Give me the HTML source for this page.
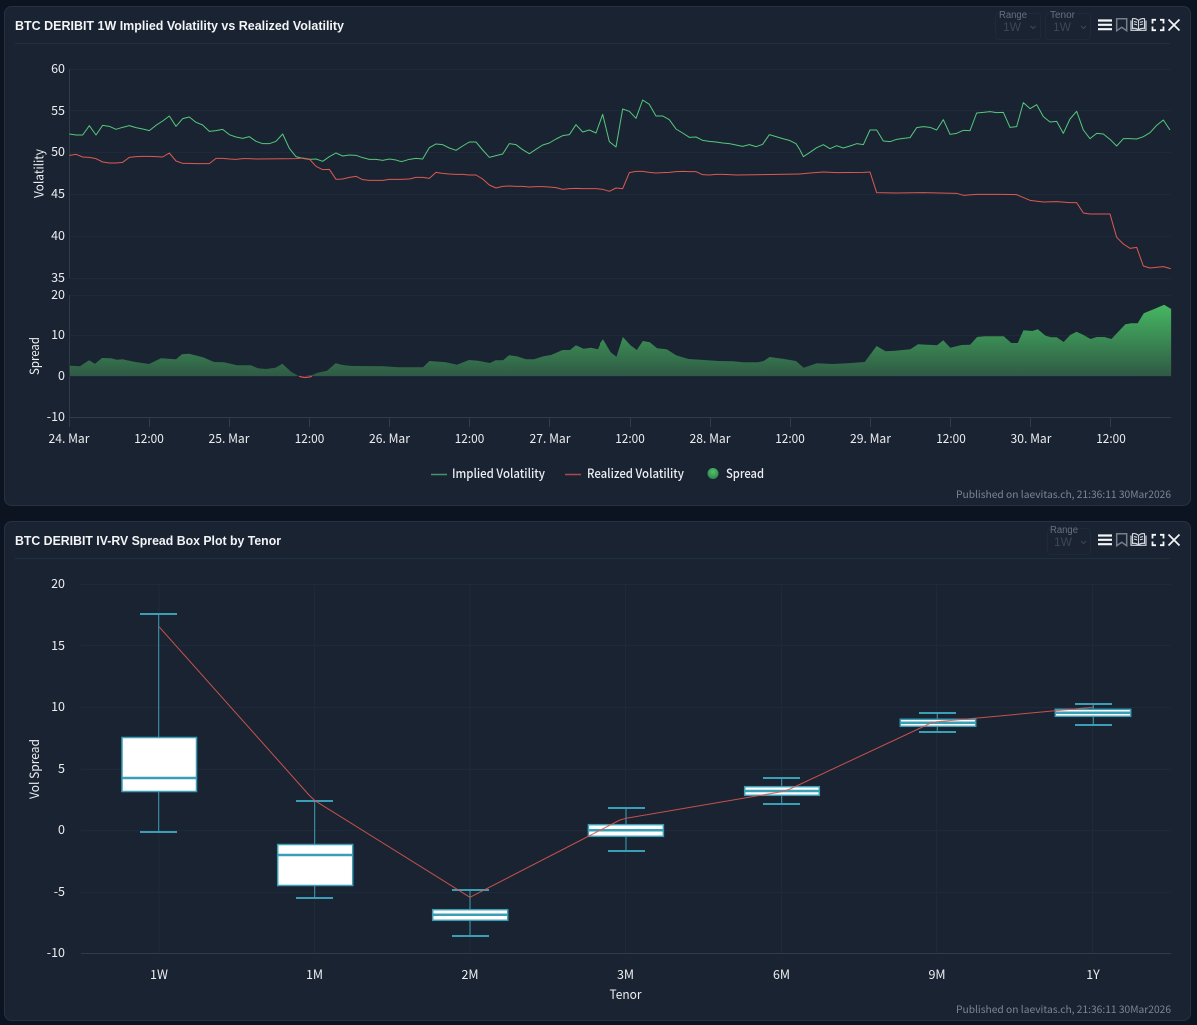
<!DOCTYPE html>
<html><head><meta charset="utf-8"><title>BTC DERIBIT Volatility</title>
<style>
html,body{margin:0;padding:0;background:#0c1321;width:1197px;height:1025px;overflow:hidden}
svg{position:absolute;left:0;top:0;display:block}
text{font-family:"Liberation Sans",sans-serif}
.t{fill:#f2f4f6;font-size:13px;font-weight:bold}
.a{fill:#eceef1;font-size:12.5px;font-family:"Noto Sans CJK JP","Liberation Sans",sans-serif}
.e{text-anchor:end}.m{text-anchor:middle}
.p{fill:#7d8793;font-size:10px;text-anchor:end;font-family:"Noto Sans CJK JP","Liberation Sans",sans-serif}
.lb{fill:#667180;font-size:10px}
.v{fill:#3c4756;font-size:12px}
.g{stroke:#1e2a3a;stroke-width:1;fill:none}
.ax{stroke:#333b47;stroke-width:1;fill:none}
.iv{fill:none;stroke:#55c87c;stroke-width:3;stroke-linejoin:round}
.rv{fill:none;stroke:#dc5a50;stroke-width:3;stroke-linejoin:round}
.c{stroke:#3a9fb5;fill:none}
</style></head><body>
<svg width="1197" height="1025" viewBox="0 0 1197 1025" xmlns="http://www.w3.org/2000/svg">
<defs>
<linearGradient id="sg" gradientUnits="userSpaceOnUse" x1="0" y1="304" x2="0" y2="376"><stop offset="0" stop-color="#46b862"/><stop offset="1" stop-color="#2f5a45"/></linearGradient>
<radialGradient id="dot" cx=".5" cy=".35" r=".7"><stop offset="0" stop-color="#4fc468"/><stop offset="1" stop-color="#2f7f4c"/></radialGradient>
<g id="icons">
<path d="M1098 20.500h14M1098 24.800h14M1098 29.200h14" stroke="#f4f6f8" stroke-width="2.200" fill="none"/>
<path d="M1116.700 18.700h10v12l-5-3.400-5 3.400z" stroke="#76808c" stroke-width="1.500" fill="none"/>
<path d="M1138.500 20.500c-2-1.900-4.300-2.200-6-1.800v9.700c2-.4 4-.1 6 1.300 2-1.400 4-1.700 6-1.300v-9.700c-1.700-.4-4-.1-6 1.800zM1138.500 20.500v9M1131 20.500v9.800h15v-9.800M1134 21.500l3 .8M1134 24l3 .8M1140 22.300l3-.8M1140 24.800l3-.8" stroke="#d3d8de" stroke-width="1.150" fill="none"/>
<path d="M1152.500 23.500v-3.700h3.500M1160 19.800h3.500v3.700M1163.500 26.500v3.700H1160M1156 30.200h-3.500v-3.700" stroke="#f4f6f8" stroke-width="1.800" fill="none"/>
<path d="M1168.500 19.500l11 11M1179.500 19.500l-11 11" stroke="#f4f6f8" stroke-width="1.700" fill="none"/>
</g>
</defs>

<!-- panels -->
<rect x="4.500" y="6.500" width="1186" height="499" rx="7" fill="#1a2332" stroke="#273140"/>
<rect x="4.500" y="521.500" width="1186" height="499" rx="7" fill="#1a2332" stroke="#273140"/>
<path d="M15 43.500H1170M15 558.500H1170" stroke="#1f3040" fill="none"/>

<!-- headers -->
<text class="t" x="15" y="30" textLength="329" lengthAdjust="spacingAndGlyphs">BTC DERIBIT 1W Implied Volatility vs Realized Volatility</text>
<text class="t" x="15" y="545" textLength="266" lengthAdjust="spacingAndGlyphs">BTC DERIBIT IV-RV Spread Box Plot by Tenor</text>

<rect x="995.500" y="13.500" width="45" height="26" rx="3" fill="none" stroke="#1f2937"/>
<rect x="1045.500" y="13.500" width="45" height="26" rx="3" fill="none" stroke="#1f2937"/>
<rect x="999" y="9" width="29" height="10" fill="#1a2332"/><rect x="1049" y="9" width="28" height="10" fill="#1a2332"/>
<text class="lb" x="999" y="18" textLength="28" lengthAdjust="spacingAndGlyphs">Range</text>
<text class="lb" x="1050" y="18" textLength="25" lengthAdjust="spacingAndGlyphs">Tenor</text>
<text class="v" x="1003" y="31">1W</text><text class="v" x="1053" y="31">1W</text>
<path d="M1030.500 26l2.500 2.500 2.500-2.500M1081 26l2.500 2.500 2.500-2.500" stroke="#3c4756" fill="none"/>
<use href="#icons"/>

<rect x="1047.500" y="528.500" width="43" height="26" rx="3" fill="none" stroke="#1f2937"/>
<rect x="1050" y="524" width="28" height="10" fill="#1a2332"/>
<text class="lb" x="1050" y="533" textLength="28" lengthAdjust="spacingAndGlyphs">Range</text>
<text class="v" x="1054" y="546">1W</text>
<path d="M1081 541l2.500 2.500 2.500-2.500" stroke="#3c4756" fill="none"/>
<use href="#icons" y="515"/>

<!-- chart 1 grid -->
<path class="g" d="M70 69.500H1171M70 110.500H1171M70 152.500H1171M70 194.500H1171M70 236.500H1171M70 278.500H1171M70 295.500H1171M70 335.500H1171M70 376.500H1171"/>
<path class="ax" d="M69.500 69V278M69.500 295V427M69 417.500H1171"/>
<path class="ax" d="M149.500 417v10M229.500 417v10M309.500 417v10M389.500 417v10M469.500 417v10M549.500 417v10M630.500 417v10M710.500 417v10M790.500 417v10M870.500 417v10M950.500 417v10M1030.500 417v10M1110.500 417v10"/>

<text class="a e" x="65" y="73">60</text><text class="a e" x="65" y="115">55</text><text class="a e" x="65" y="156">50</text><text class="a e" x="65" y="198">45</text><text class="a e" x="65" y="240">40</text><text class="a e" x="65" y="282">35</text>
<text class="a e" x="65" y="299">20</text><text class="a e" x="65" y="339">10</text><text class="a e" x="65" y="380">0</text><text class="a e" x="65" y="421">-10</text>
<text class="a m" transform="translate(43.500 173.500) rotate(-90)" textLength="49" lengthAdjust="spacingAndGlyphs">Volatility</text>
<text class="a m" transform="translate(39 356) rotate(-90)" textLength="38" lengthAdjust="spacingAndGlyphs">Spread</text>

<text class="a m" x="69" y="443" textLength="41" lengthAdjust="spacingAndGlyphs">24. Mar</text><text class="a m" x="149" y="443" textLength="29.500" lengthAdjust="spacingAndGlyphs">12:00</text><text class="a m" x="229" y="443" textLength="41" lengthAdjust="spacingAndGlyphs">25. Mar</text><text class="a m" x="309.500" y="443" textLength="29.500" lengthAdjust="spacingAndGlyphs">12:00</text><text class="a m" x="389.500" y="443" textLength="41" lengthAdjust="spacingAndGlyphs">26. Mar</text><text class="a m" x="469.500" y="443" textLength="29.500" lengthAdjust="spacingAndGlyphs">12:00</text><text class="a m" x="550" y="443" textLength="41" lengthAdjust="spacingAndGlyphs">27. Mar</text><text class="a m" x="630" y="443" textLength="29.500" lengthAdjust="spacingAndGlyphs">12:00</text><text class="a m" x="710" y="443" textLength="41" lengthAdjust="spacingAndGlyphs">28. Mar</text><text class="a m" x="790" y="443" textLength="29.500" lengthAdjust="spacingAndGlyphs">12:00</text><text class="a m" x="870.500" y="443" textLength="41" lengthAdjust="spacingAndGlyphs">29. Mar</text><text class="a m" x="951" y="443" textLength="29.500" lengthAdjust="spacingAndGlyphs">12:00</text><text class="a m" x="1031" y="443" textLength="41" lengthAdjust="spacingAndGlyphs">30. Mar</text><text class="a m" x="1111" y="443" textLength="29.500" lengthAdjust="spacingAndGlyphs">12:00</text>

<!-- spread area -->
<polygon fill="url(#sg)" points="70,376 70,365.700 80,366.300 89,360.300 95,363.700 102,358 111,358.300 117,359.700 122.500,359.300 134,361.700 149,364 161,358.300 176,359.300 182,354.300 189,353.700 203,357.300 214,362 224,362.300 237,365.300 251,365.300 258,368.300 266,369 275.500,367.700 282.400,363.700 291,371.700 298.500,376 305,376 312,375 317.600,372.700 327,370.700 335.600,363.300 342.500,365 352,366 383,366.300 398,367.300 423,367.300 429.400,361 446,362.300 457,364.700 469,360 478,360.700 490,363 495.600,360.300 503,360.300 509,355.300 516.700,356.300 526,359.300 534,359.300 543.400,356.300 551,355 562.600,350 570,350 576,345.300 583.600,348.700 591,347.700 598,349.300 600.500,343.500 600.500,376"/>
<polygon fill="url(#sg)" transform="translate(600 0) scale(.995 1) translate(-600 0)" points="600,376 600,343.300 603,339.300 610.700,352.300 616.500,356.700 623,337 630.600,345.300 637,350 643,341 650,342.300 657.400,348.300 667,349.300 676.500,355.300 688.800,359 705,360 718.600,361 734,361.300 743.500,362.300 759,362.300 764.600,361 770.300,357 783.700,358.700 797,361 804.700,367.700 818,363.300 833.400,364 848.800,363.300 866,362 878,346 887,351.300 896.600,350.700 912,349.300 919.600,344.300 938.700,345.300 945,340.300 952,347.700 963.600,345 972,344.700 979,337 986.500,336.300 1005.700,336.300 1013.300,343 1019.800,343 1025.600,330.300 1034.400,331 1040,329.300 1047.800,335.700 1053.500,337.300 1059,337.300 1066,342 1072.600,335 1079,331.700 1086,335 1093,339 1099.400,337 1107,337 1114,339 1128,324.300 1134,323.300 1140.400,323.300 1146.500,313.300 1158.800,308.300 1167,304.700 1174,309 1174,376"/>
<path d="M299 376.300l5 1.200 5-.4 3-.8" stroke="#d8504c" stroke-width="1.200" fill="none"/>

<!-- IV / RV -->
<g transform="translate(0 50) scale(.33333)">
<polyline class="iv" points="208,252 228,255 248,255 268,227 288,255 308,226 328,229 348,238 368,232 388,227 408,233 428,237 448,242 468,226 488,213 508,198 528,229 548,206 568,201 588,217 608,225 628,244 648,242 668,238 688,254 708,261 728,265 748,260 768,274 788,281 808,281 828,274 848,252 868,295 888,320 908,325 928,328 948,327 968,334 988,320 1008,309 1028,318 1048,315 1068,316 1088,323 1108,328 1128,328 1148,331 1168,327 1188,330 1200,334"/>
<polyline class="rv" points="208,316 228,313 248,321 268,322 288,326 308,336 328,339 348,339 368,337 388,322 408,320 428,319 448,319 468,320 488,321 508,309 528,333 548,340 568,340 588,341 608,341 628,341 648,325 668,325 688,327 708,328 728,326 748,326 768,327 888,326 908,324 928,327 948,349 968,359 988,358 1008,388 1028,387 1048,382 1068,379 1088,389 1108,391 1128,391 1148,391 1168,388 1200,388"/>
</g>
<g transform="translate(400 50) scale(.33333)">
<polyline class="iv" points="0,334 8,334 28,328 48,325 68,327 88,293 108,282 128,284 148,294 168,301 188,288 208,276 228,276 248,300 268,322 288,317 308,312 328,281 348,284 368,299 388,311 408,298 428,285 448,279 468,267 488,257 508,254 528,224 548,246 568,240 588,249 608,193 628,275 648,291 668,177 688,184 708,205 728,150 748,163 768,198 788,198 808,209 828,237 848,249 868,262 888,261 908,271 928,274 948,276 968,279 988,281 1008,285 1028,289 1048,284 1068,290 1088,283 1108,254 1128,260 1148,266 1168,271 1188,281 1200,300"/>
<polyline class="rv" points="0,388 28,387 48,382 68,382 88,385 108,367 128,370 148,372 168,373 188,373 208,375 228,375 248,387 268,405 288,414 308,409 328,408 348,409 368,409 388,411 408,410 428,410 448,411 468,413 488,418 508,416 528,415 548,416 568,416 588,416 608,418 628,424 648,414 668,416 688,368 708,364 728,364 748,367 768,369 788,368 808,367 828,365 848,364 868,365 888,365 908,374 928,375 948,373 968,373 988,374 1008,375 1200,372"/>
</g>
<g transform="translate(800 50) scale(.33333)">
<polyline class="iv" points="0,300 10,320 30,307 50,293 70,284 90,296 110,287 130,294 150,288 170,281 190,284 210,240 230,240 250,273 270,275 290,268 310,265 330,263 350,233 370,230 390,232 410,240 430,209 450,253 470,250 490,241 510,242 530,189 550,187 570,185 590,188 610,187 630,232 650,230 670,158 690,176 710,164 730,200 750,216 770,214 790,250 810,207 830,184 850,240 870,266 890,250 910,252 930,268 950,288 970,266 990,266 1010,267 1030,260 1050,248 1070,226 1090,210 1110,240"/>
<polyline class="rv" points="0,372 30,369 70,366 110,368 190,367 210,366 230,428 290,429 370,428 470,430 490,436 530,433 610,433 650,434 690,451 730,456 770,455 810,458 830,458 850,489 870,492 930,492 950,562 970,582 990,595 1010,592 1030,648 1050,654 1090,650 1112,656"/>
</g>

<!-- legend -->
<path d="M431 474.500h16" stroke="#3f9a63" stroke-width="1.500"/>
<text class="a" x="452" y="478" textLength="93" lengthAdjust="spacingAndGlyphs" style="font-weight:500">Implied Volatility</text>
<path d="M565 474.500h16" stroke="#a84a50" stroke-width="1.500"/>
<text class="a" x="587" y="478" textLength="97" lengthAdjust="spacingAndGlyphs" style="font-weight:500">Realized Volatility</text>
<circle cx="713" cy="473.500" r="5.500" fill="url(#dot)"/>
<text class="a" x="726" y="478" textLength="38" lengthAdjust="spacingAndGlyphs" style="font-weight:500">Spread</text>
<text class="p" x="1171" y="498" textLength="215" lengthAdjust="spacingAndGlyphs">Published on laevitas.ch, 21:36:11 30Mar2026</text>

<!-- chart 2 grid -->
<path class="g" d="M81 584.500H1171M81 645.500H1171M81 707.500H1171M81 769.500H1171M81 830.500H1171M81 892.500H1171"/>
<path class="g" d="M159 584V953M314.500 584V953M470 584V953M625.500 584V953M781.500 584V953M936.500 584V953M1092.500 584V953"/>
<path class="ax" d="M81 953.500H1171"/>

<text class="a e" x="65" y="588">20</text><text class="a e" x="65" y="650">15</text><text class="a e" x="65" y="711">10</text><text class="a e" x="65" y="773">5</text><text class="a e" x="65" y="834">0</text><text class="a e" x="65" y="896">-5</text><text class="a e" x="65" y="957">-10</text>
<text class="a m" transform="translate(39 769) rotate(-90)" textLength="60" lengthAdjust="spacingAndGlyphs">Vol Spread</text>
<text class="a m" x="159" y="979">1W</text><text class="a m" x="314.500" y="979">1M</text><text class="a m" x="470" y="979">2M</text><text class="a m" x="625.500" y="979">3M</text><text class="a m" x="781.500" y="979">6M</text><text class="a m" x="937" y="979">9M</text><text class="a m" x="1093" y="979">1Y</text>
<text class="a m" x="625.500" y="999" textLength="32" lengthAdjust="spacingAndGlyphs">Tenor</text>
<text class="p" x="1171" y="1013" textLength="215" lengthAdjust="spacingAndGlyphs">Published on laevitas.ch, 21:36:11 30Mar2026</text>

<!-- boxes -->
<g>
<path class="c" d="M158.700 614V737M158.700 791V832M314.700 801V844M314.700 885V898M470 890V910M470 920V936M626 808V825M626 836V851M781.700 778V787M781.700 795V804M937.300 713V719M937.300 726V732M1093.300 704V709M1093.300 716V725"/>
<path class="c" stroke-width="2" d="M140 614h37M140 832h37M296 801h37M296 898h37M452 890h37M452 936h37M608 808h37M608 851h37M763 778h37M763 804h37M919 713h37M919 732h37M1075 704h37M1075 725h37"/>
<g fill="#fff" stroke="#3a9fb5" stroke-width="1.500">
<rect x="122" y="737.500" width="74.500" height="54"/>
<rect x="277.700" y="844.500" width="75" height="41"/>
<rect x="432.700" y="909.700" width="75" height="10.600"/>
<rect x="588.400" y="824.700" width="75" height="11.600"/>
<rect x="744.700" y="786.700" width="74.600" height="8.600"/>
<rect x="900.300" y="719.300" width="75.400" height="7"/>
<rect x="1055.300" y="709.300" width="75.400" height="7"/>
</g>
<path class="c" stroke-width="2.500" d="M122 778h74.500M277.700 855h75M432.700 914.700h75M588.400 830.300h75M744.700 791h74.600M900.300 722.700h75.400M1055.300 712.700h75.400"/>
</g>
<polyline fill="none" stroke="#d9584f" stroke-width="1" stroke-opacity=".9" stroke-linejoin="round" points="159,626.700 309,795 315,800.700 470,897.300 620,820 626,818.300 781.700,791.700 790,789 931,723 937,721.700 1093,707.300"/>
</svg>
</body></html>
